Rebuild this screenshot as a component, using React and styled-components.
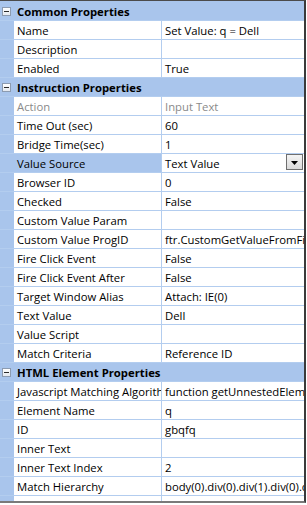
import React from "react";
import styled, { createGlobalStyle } from "styled-components";

const BLUE = "#a9c5ec";
const LINE = "#b3cdef";

const GlobalStyle = createGlobalStyle`
    html, body {
        margin: 0;
        padding: 0;
        background: #ffffff;
    }
`;

const Frame = styled.div`
    box-sizing: border-box;
    width: 306px;
    height: 503px;
    border-top: 1px solid #4b4b4b;
    border-right: 2px solid #3a3a3a;
    border-bottom: 2px solid #7a7a7a;
    background: ${BLUE};
    padding-top: 1px;
    overflow: hidden;
    font-family: "Open Sans", "Noto Sans", sans-serif;
    font-size: 11.3px;
    color: #000;
`;

const Row = styled.div`
    display: flex;
    height: 19px;
    box-sizing: border-box;
    border-bottom: 1px solid ${LINE};
    background: ${(p) => (p.$header ? BLUE : "#ffffff")};
`;

const Gutter = styled.div`
    width: 14px;
    flex-shrink: 0;
    background: ${BLUE};
    display: flex;
    align-items: center;
    justify-content: center;
    padding-right: 1px;
    box-sizing: border-box;
`;

const Toggle = styled.div`
    position: relative;
    width: 9px;
    height: 9px;
    box-sizing: border-box;
    border: 1px solid #8c9bb0;
    background: linear-gradient(#ffffff, #e3e8ef);
    margin-top: 1px;

    &::after {
        content: "";
        position: absolute;
        left: 1px;
        top: 3px;
        width: 5px;
        height: 1px;
        background: #2b2b2b;
    }
`;

const HeaderLabel = styled.div`
    flex: 1;
    padding-left: 3px;
    font-weight: bold;
    line-height: 19px;
    white-space: nowrap;
    overflow: hidden;
`;

const NameCell = styled.div`
    width: 148px;
    flex-shrink: 0;
    box-sizing: border-box;
    border-right: 1px solid ${LINE};
    padding-left: 3px;
    line-height: 19px;
    white-space: nowrap;
    overflow: hidden;
    background: ${(p) => (p.$selected ? BLUE : "#ffffff")};
    color: ${(p) => (p.$readOnly ? "#8a8a8a" : "#000")};
`;

const ValueCell = styled.div`
    position: relative;
    flex: 1;
    min-width: 0;
    padding-left: 3px;
    line-height: 19px;
    white-space: nowrap;
    overflow: hidden;
    color: ${(p) => (p.$readOnly ? "#8a8a8a" : "#000")};
`;

const DropButton = styled.div`
    position: absolute;
    top: 0;
    right: 1px;
    width: 17px;
    height: 16px;
    box-sizing: border-box;
    border: 1px solid #6f6f6f;
    background: linear-gradient(#f4f4f4, #dadada);
    display: flex;
    align-items: center;
    justify-content: center;
    padding-top: 2px;
`;

const sections = [
    {
        title: "Common Properties",
        rows: [
            { name: "Name", value: "Set Value: q = Dell" },
            { name: "Description", value: "" },
            { name: "Enabled", value: "True" },
        ],
    },
    {
        title: "Instruction Properties",
        rows: [
            { name: "Action", value: "Input Text", readOnly: true },
            { name: "Time Out (sec)", value: "60" },
            { name: "Bridge Time(sec)", value: "1" },
            { name: "Value Source", value: "Text Value", selected: true, dropdown: true },
            { name: "Browser ID", value: "0" },
            { name: "Checked", value: "False" },
            { name: "Custom Value Param", value: "" },
            { name: "Custom Value ProgID", value: "ftr.CustomGetValueFromFile" },
            { name: "Fire Click Event", value: "False" },
            { name: "Fire Click Event After", value: "False" },
            { name: "Target Window Alias", value: "Attach: IE(0)" },
            { name: "Text Value", value: "Dell" },
            { name: "Value Script", value: "" },
            { name: "Match Criteria", value: "Reference ID" },
        ],
    },
    {
        title: "HTML Element Properties",
        rows: [
            { name: "Javascript Matching Algorithm", value: "function getUnnestedElement()" },
            { name: "Element Name", value: "q" },
            { name: "ID", value: "gbqfq" },
            { name: "Inner Text", value: "" },
            { name: "Inner Text Index", value: "2" },
            { name: "Match Hierarchy", value: "body(0).div(0).div(1).div(0).div(0)" },
            { name: "", value: "" },
        ],
    },
];

const App = () => {
    return (
        <>
            <GlobalStyle />
            <Frame>
                {sections.map((s) => (
                    <React.Fragment key={s.title}>
                        <Row $header>
                            <Gutter>
                                <Toggle />
                            </Gutter>
                            <HeaderLabel>{s.title}</HeaderLabel>
                        </Row>
                        {s.rows.map((r, i) => (
                            <Row key={s.title + i}>
                                <Gutter />
                                <NameCell $selected={r.selected} $readOnly={r.readOnly}>
                                    {r.name}
                                </NameCell>
                                <ValueCell $readOnly={r.readOnly}>
                                    {r.value}
                                    {r.dropdown && (
                                        <DropButton>
                                            <svg width="7" height="4" viewBox="0 0 7 4">
                                                <polygon points="0,0 7,0 3.5,4" fill="#000" />
                                            </svg>
                                        </DropButton>
                                    )}
                                </ValueCell>
                            </Row>
                        ))}
                    </React.Fragment>
                ))}
            </Frame>
        </>
    );
};

export default App;
